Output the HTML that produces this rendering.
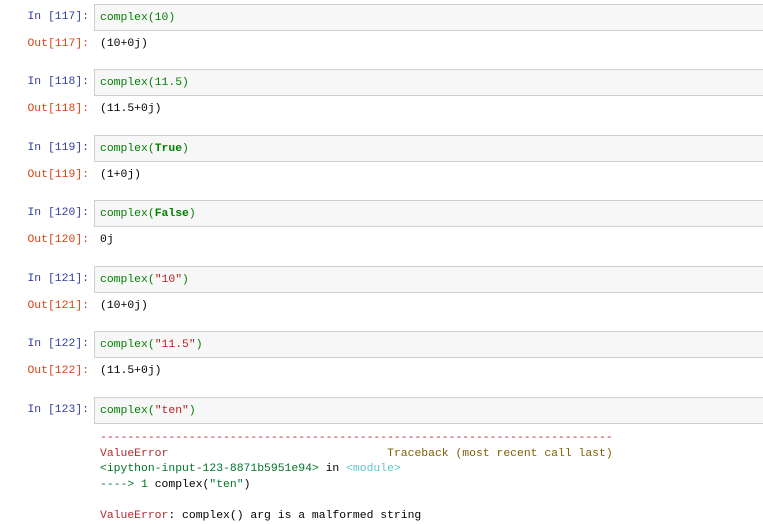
<!DOCTYPE html>
<html><head><style>
body{margin:0;background:#fff;width:763px;height:524px;overflow:hidden;font-family:"Liberation Mono",monospace;font-size:11.4px;}
.c{position:absolute;left:0;width:763px}
.lab{position:absolute;left:0;width:89px;text-align:right;line-height:27px}
.in{color:#303F9F}.out{color:#D84315}
.box{position:absolute;left:94px;width:680px;height:25px;background:#f7f7f7;border:1px solid #cfcfcf;line-height:26px;padding-left:5px;box-sizing:content-box}
.o{position:absolute;left:100px;line-height:27px;color:#000}
.k{color:#008000}.s{color:#BA2121}.b{color:#008000;font-weight:bold}
pre{margin:0;font-family:inherit;font-size:inherit;line-height:15.5px}
</style></head><body>
<div class="c" style="top:4px"><div class="lab in">In [117]:</div><div class="box"><span class="k">complex(10)</span></div>
<div class="lab out" style="top:27px">Out[117]:</div><div class="o" style="top:27px">(10+0j)</div></div>
<div class="c" style="top:69px"><div class="lab in">In [118]:</div><div class="box"><span class="k">complex(11.5)</span></div>
<div class="lab out" style="top:27px">Out[118]:</div><div class="o" style="top:27px">(11.5+0j)</div></div>
<div class="c" style="top:135px"><div class="lab in">In [119]:</div><div class="box"><span class="k">complex(</span><span class="b">True</span><span class="k">)</span></div>
<div class="lab out" style="top:27px">Out[119]:</div><div class="o" style="top:27px">(1+0j)</div></div>
<div class="c" style="top:200px"><div class="lab in">In [120]:</div><div class="box"><span class="k">complex(</span><span class="b">False</span><span class="k">)</span></div>
<div class="lab out" style="top:27px">Out[120]:</div><div class="o" style="top:27px">0j</div></div>
<div class="c" style="top:266px"><div class="lab in">In [121]:</div><div class="box"><span class="k">complex(</span><span class="s">"10"</span><span class="k">)</span></div>
<div class="lab out" style="top:27px">Out[121]:</div><div class="o" style="top:27px">(10+0j)</div></div>
<div class="c" style="top:331px"><div class="lab in">In [122]:</div><div class="box"><span class="k">complex(</span><span class="s">"11.5"</span><span class="k">)</span></div>
<div class="lab out" style="top:27px">Out[122]:</div><div class="o" style="top:27px">(11.5+0j)</div></div>
<div class="c" style="top:397px"><div class="lab in">In [123]:</div><div class="box"><span class="k">complex(</span><span class="s">"ten"</span><span class="k">)</span></div></div>
<div style="position:absolute;left:100px;top:431px"><pre><span style="color:#B22B31">---------------------------------------------------------------------------</span>
<span style="color:#B22B31">ValueError</span>                                <span style="color:#806000">Traceback (most recent call last)</span>
<span style="color:#007427">&lt;ipython-input-123-8871b5951e94&gt;</span> in <span style="color:#60C6C8">&lt;module&gt;</span>
<span style="color:#007427">----&gt; 1</span> complex(<span style="color:#007427">"ten"</span>)

<span style="color:#B22B31">ValueError</span>: complex() arg is a malformed string</pre></div>
</body></html>
